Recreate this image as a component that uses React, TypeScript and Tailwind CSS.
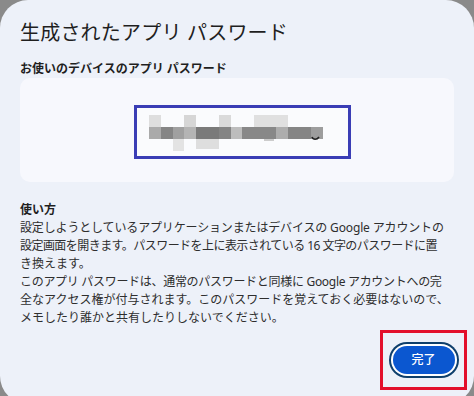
const FONT = { fontFamily: '"Noto Sans", "Noto Sans CJK JP", sans-serif' };

// pixelated (masked) password – drawn as blocks, like the blurred screenshot
const BLOCKS: [number, number, number, number, string][] = [
  // top row (light)
  [12, 7, 12, 12, "#dedede"],
  [47, 7, 12, 12, "#d6d6d6"],
  [82, 7, 12, 12, "#dadada"],
  [117, 7, 34, 12, "#e0e0e0"],
  // main bar
  [12, 19, 12, 12, "#aaaaaa"],
  [24, 19, 12, 12, "#858585"],
  [36, 19, 11, 12, "#a0a0a0"],
  [47, 19, 12, 12, "#b4b4b4"],
  [59, 19, 23, 12, "#7a7a7a"],
  [82, 19, 12, 12, "#848484"],
  [94, 19, 11, 12, "#bdbdbd"],
  [105, 19, 34, 12, "#888888"],
  [139, 19, 12, 12, "#adadad"],
  [151, 19, 23, 12, "#858585"],
  [174, 19, 12, 12, "#9d9d9d"],
  // bottom row (light)
  [36, 31, 11, 12, "#e3e3e3"],
  [59, 31, 23, 10, "#dedede"],
  [127, 31, 10, 2, "#cccccc"],
];

export default function App() {
  return (
    <div className="h-[396px] w-[474px] overflow-hidden bg-[#8a8a8a]" style={FONT}>
      <div className="flex h-[404px] w-full flex-col rounded-[28px] bg-[#edf1f9]">
        <div className="px-5 pt-[19px]">
          <h1 className="text-[20px] leading-[28px] font-normal tracking-[0.2px] text-[#1f1f1f]">
            生成されたアプリ パスワード
          </h1>
          <div className="mt-[14px] text-[12px] leading-[16px] font-bold text-[#1f1f1f]">
            お使いのデバイスのアプリ パスワード
          </div>
          <div className="mt-[1px] flex h-[104px] justify-center rounded-[10px] bg-[#f7f8fd] pt-[27px]">
            <div className="ml-[10px] h-[54px] w-[217px] border-[3px] border-[#3a3db5] bg-[#fafbfd]">
              <svg width="211" height="48" viewBox="0 0 211 48">
                {BLOCKS.map(([x, y, w, h, c], i) => (
                  <rect key={i} x={x} y={y} width={w} height={h} fill={c} />
                ))}
                <path d="M175 29c1 3 5 3 7 0" stroke="#222" strokeWidth="1.6" fill="none" />
              </svg>
            </div>
          </div>

          <div className="mt-[19px] text-[12px] leading-[18px] text-[#2e2e2e]">
            <div className="font-bold text-[#1f1f1f]">使い方</div>
            <div className="whitespace-nowrap">
              <span className="tracking-[-0.15px]">
                設定しようとしているアプリケーションまたはデバイスの Google アカウントの
              </span>
              <br />
              <span className="tracking-[-0.55px]">
                設定画面を開きます。パスワードを上に表示されている 16 文字のパスワードに置
              </span>
              <br />
              き換えます。
              <br />
              <span className="tracking-[-0.3px]">
                このアプリ パスワードは、通常のパスワードと同様に Google アカウントへの完
              </span>
              <br />
              全なアクセス権が付与されます。このパスワードを覚えておく必要はないので、
              <br />
              メモしたり誰かと共有したりしないでください。
            </div>
          </div>
        </div>

        <div className="mt-[3px] flex justify-end pr-[7px]">
          <div className="flex h-[60px] w-[87px] items-center justify-center border-[3px] border-[#e3102c]">
            <button className="h-[28px] w-[62px] rounded-full bg-[#0b57d0] text-[12px] font-medium text-white shadow-[0_0_0_2px_#ffffff,0_0_0_4px_#0e3f6c]">
              完了
            </button>
          </div>
        </div>
      </div>
    </div>
  );
}
